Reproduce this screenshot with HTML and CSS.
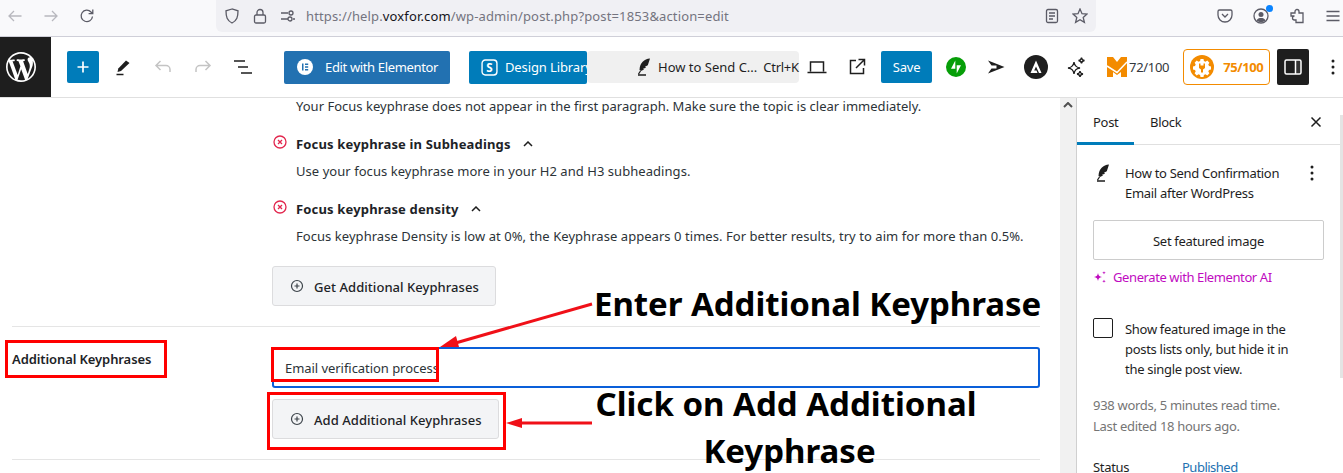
FILE: index.html
```html
<!DOCTYPE html>
<html lang="en">
<head>
<meta charset="utf-8">
<title>How to Send Confirmation Email after WordPress</title>
<link rel="stylesheet" href="styles.css">
</head>
<body>
<header class="browser">
  <div class="nav">
    <svg class="ico dim" viewBox="0 0 16 16"><path d="M14.5 8H2M7 3 2 8l5 5"/></svg>
    <svg class="ico dim" viewBox="0 0 16 16"><path d="M1.5 8H14M9 3l5 5-5 5"/></svg>
    <svg class="ico" viewBox="0 0 16 16"><path d="M13.5 8.5A5.7 5.7 0 1 1 12 4l1.5 1.5M13.8 1.5v4.2H9.6"/></svg>
  </div>
  <div class="urlbar">
    <svg class="ico" viewBox="0 0 16 16"><path d="M8 1 2 2.8c0 6 1 9.6 6 12.2 5-2.600 6-6.200 6-12.200z"/></svg>
    <svg class="ico" viewBox="0 0 16 16"><rect x="2.500" y="7" width="11" height="8" rx="1.500"/><path d="M5 7V4.500a3 3 0 0 1 6 0V7"/></svg>
    <svg class="ico" viewBox="0 0 16 16"><path d="M1 5h7M13 11h2M1 11h7"/><circle cx="11" cy="5" r="2"/><circle cx="4" cy="11" r="2" transform="translate(6 0)"/></svg>
    <span class="url">https://help.<b>voxfor.com</b>/wp-admin/post.php?post=1853&amp;action=edit</span>
    <svg class="ico" viewBox="0 0 16 16"><rect x="2.500" y="1.500" width="11" height="13" rx="1.500"/><path d="M5 5h6M5 8h6M5 11h4"/></svg>
    <svg class="ico" viewBox="0 0 16 16"><path d="m8 1 2 4.700 5 .4-3.800 3.300 1.200 5L8 11.700l-4.400 2.700 1.200-5L1 6.100l5-.4z"/></svg>
  </div>
  <div class="tray">
    <svg class="ico" viewBox="0 0 16 16"><path d="M2.500 2h11A1.500 1.500 0 0 1 15 3.500V7a7 7 0 0 1-14 0V3.500A1.500 1.500 0 0 1 2.500 2zM5 6l3 3 3-3"/></svg>
    <span class="account">
      <svg class="ico" viewBox="0 0 16 16"><circle cx="8" cy="8" r="7"/><circle class="solid" cx="8" cy="6.500" r="2.500"/><path class="solid" d="M3.500 12.500c1-2 2.500-2.500 4.500-2.500s3.500.5 4.500 2.500c-2.500 2-6.500 2-9 0z"/></svg>
      <i class="dot"></i>
    </span>
    <svg class="ico" viewBox="0 0 16 16"><path d="M6 3.500a2 2 0 0 1 4 0V5h4v9.500H7V12H5.500a2 2 0 0 1 0-4H2V5h4z"/></svg>
    <svg class="ico" viewBox="0 0 16 16"><path d="M1.500 3.500h13M1.500 8h13M1.500 12.500h13"/></svg>
  </div>
</header>

<div class="toolbar">
  <div class="wp"><svg viewBox="0 0 20 20"><path d="M20 10c0-5.510-4.490-10-10-10C4.480 0 0 4.490 0 10c0 5.520 4.480 10 10 10 5.510 0 10-4.480 10-10zM7.780 15.370 4.370 6.220c.55-.02 1.170-.08 1.170-.08.5-.06.44-1.130-.06-1.110 0 0-1.450.11-2.370.11-.18 0-.37 0-.58-.01C4.120 2.690 6.870 1.110 10 1.110c2.330 0 4.450.87 6.050 2.340-.68-.11-1.650.39-1.650 1.580 0 .74.45 1.360.9 2.100.35.61.55 1.360.55 2.460 0 1.490-1.400 5-1.400 5l-3.030-8.370c.54-.02.82-.17.82-.17.5-.05.44-1.250-.06-1.220 0 0-1.440.12-2.380.12-.87 0-2.330-.12-2.330-.12-.5-.03-.56 1.200-.06 1.220l.92.08 1.260 3.410zM17.410 10c.24-.64.74-1.870.43-4.250.7 1.290 1.050 2.710 1.050 4.250 0 3.290-1.730 6.240-4.400 7.780.97-2.590 1.940-5.200 2.920-7.780zM6.100 18.090C3.120 16.650 1.110 13.530 1.110 10c0-1.300.23-2.480.72-3.590C3.250 10.300 4.670 14.200 6.100 18.090zm4.030-6.630 2.580 6.980c-.86.29-1.760.45-2.710.45-.79 0-1.570-.11-2.290-.33.81-2.380 1.620-4.740 2.420-7.100z"/></svg></div>
  <button class="plus"><svg viewBox="0 0 16 16"><path d="M8 2.500v11M2.500 8h11"/></svg></button>
  <svg class="tool pencil" viewBox="0 0 20 20"><path class="fill" d="M13 3.500 16.500 6 8 14l-3.500 1 .8-3.500z"/><path d="M3.500 17.500h7"/></svg>
  <svg class="tool undo" viewBox="0 0 20 20"><path d="M7.500 4 3 8.500 7.500 13M3 8.500h10a4 4 0 0 1 4 4V15"/></svg>
  <svg class="tool redo" viewBox="0 0 20 20"><path d="M12.500 4 17 8.500 12.500 13M17 8.500H7a4 4 0 0 0-4 4V15"/></svg>
  <svg class="tool list" viewBox="0 0 20 20"><path d="M1 4h11M5 10h10M8 16h11"/></svg>
  <a class="cta elementor"><svg class="badge" viewBox="0 0 16 16"><circle cx="8" cy="8" r="8"/><path class="cut" d="M5 4.500h1.500v7H5zM8 4.500h3.200V6H8zM8 7.250h3.200v1.500H8zM8 10h3.200v1.500H8z"/></svg>Edit with Elementor</a>
  <a class="cta library"><svg class="sbadge" viewBox="0 0 16 16"><rect x="1" y="1" width="14" height="14" rx="3"/><text x="8" y="12" text-anchor="middle">S</text></svg><span class="clip">Design Library</span></a>
  <div class="command">
    <svg class="feather" viewBox="0 0 20 20"><path class="fill" d="M16 1.500C10 2 6 5.500 5.500 13l1.500 1 3-1.500-1-.8 3-1-1-.9 2.800-1.600z"/><path d="M4 18h8M6.500 14 4.500 17"/></svg>
    <span class="ctitle">How to Send C...</span>
    <span class="kbd">Ctrl+K</span>
  </div>
  <svg class="tool laptop" viewBox="0 0 20 20"><path d="M3.500 14.500V5h13v9.500M0.500 15.500h19"/></svg>
  <svg class="tool external" viewBox="0 0 20 20"><path d="M9 3.500H3.500v13h13V11M9 11l8-8M11.500 2.500H17.500V8.500"/></svg>
  <button class="save">Save</button>
  <svg class="plug jetpack" viewBox="0 0 20 20"><circle cx="10" cy="10" r="10"/><path class="w" d="M9.300 3.500v8.300H5zM10.700 16.500V8.200H15z"/></svg>
  <svg class="plug send" viewBox="0 0 20 20"><path d="M2 3.500 18.500 10 2 16.500l3.500-5h5v-3h-5z"/></svg>
  <svg class="plug astra" viewBox="0 0 24 24"><circle cx="12" cy="12" r="12"/><path class="w" d="M12 5.500 17.500 18h-2.500l-3-6.500-1.800 4h2.300l1 2.500H6.500z"/></svg>
  <svg class="plug spark" viewBox="0 0 22 22"><path d="M9 6c.6 4 2 5.500 6 6-4 .6-5.400 2-6 6-.6-4-2-5.400-6-6 4-.5 5.400-2 6-6zM16.500 1.500c.3 2 1 2.700 3 3-2 .3-2.700 1-3 3-.3-2-1-2.700-3-3 2-.3 2.700-1 3-3zM15 15c.3 2 1 2.700 3 3-2 .3-2.700 1-3 3-.3-2-1-2.700-3-3 2-.3 2.700-1 3-3z"/></svg>
  <svg class="mlogo" viewBox="0 0 20 20"><path d="M0 0h6l4 5 4-5h6v20h-6v-5l-4 3-4-3v5H0z"/><path class="m2" d="M0 9l10 6.500L20 5"/></svg>
  <span class="mscore">72/100</span>
  <span class="score"><svg viewBox="0 0 24 24"><circle cx="12" cy="12" r="12"/><path class="w" d="M10.500 4h3l.4 2 1.600.7 1.800-1.100 2.100 2.100-1.100 1.800.7 1.500 2 .5v3l-2 .4-.7 1.600 1.100 1.800-2.100 2.100-1.800-1.100-1.600.7-.4 2h-3l-.4-2-1.600-.7-1.800 1.100-2.100-2.100 1.100-1.800-.7-1.600-2-.4v-3l2-.5.7-1.500-1.100-1.800 2.100-2.100 1.800 1.100 1.600-.7z"/><path class="o" d="M9 8.500h1.500v2h3v-2H15v4.500l-2 1.500v3h-2v-3L9 13z"/></svg><b>75/100</b></span>
  <button class="panel"><svg viewBox="0 0 20 20"><rect x="2" y="3" width="16" height="14" rx="1.500"/><path d="M12.500 3v14"/><path class="shade" d="M12.500 3H18v14h-5.500z"/></svg></button>
  <svg class="more" viewBox="0 0 4 20"><circle cx="2" cy="4" r="1.500"/><circle cx="2" cy="10" r="1.500"/><circle cx="2" cy="16" r="1.500"/></svg>
</div>

<main class="workspace">
  <div class="canvas">
    <section class="row first">
      <div></div>
      <div class="checks">
        <p class="hint lead">Your Focus keyphrase does not appear in the first paragraph. Make sure the topic is clear immediately.</p>
        <div class="check">
          <h4><svg class="err" viewBox="0 0 14 14"><circle cx="7" cy="7" r="6"/><path d="M5 5l4 4M9 5l-4 4"/></svg>Focus keyphrase in Subheadings<svg class="chev" viewBox="0 0 10 6"><path d="M1 5l4-4 4 4"/></svg></h4>
          <p class="hint">Use your focus keyphrase more in your H2 and H3 subheadings.</p>
        </div>
        <div class="check">
          <h4><svg class="err" viewBox="0 0 14 14"><circle cx="7" cy="7" r="6"/><path d="M5 5l4 4M9 5l-4 4"/></svg>Focus keyphrase density<svg class="chev" viewBox="0 0 10 6"><path d="M1 5l4-4 4 4"/></svg></h4>
          <p class="hint">Focus keyphrase Density is low at 0%, the Keyphrase appears 0 times. For better results, try to aim for more than 0.5%.</p>
        </div>
        <button class="addbtn"><svg viewBox="0 0 14 14"><circle cx="7" cy="7" r="5.500"/><path d="M7 4.500v5M4.500 7h5"/></svg>Get Additional Keyphrases</button>
      </div>
    </section>
    <section class="row second">
      <label class="rowlabel">Additional Keyphrases</label>
      <div class="field">
        <div class="input">Email verification process</div>
        <button class="addbtn"><svg viewBox="0 0 14 14"><circle cx="7" cy="7" r="5.500"/><path d="M7 4.500v5M4.500 7h5"/></svg>Add Additional Keyphrases</button>
      </div>
    </section>
  </div>
  <div class="gutter"><svg viewBox="0 0 10 6"><path d="M1 5l4-4 4 4"/></svg></div>
  <aside class="sidebar">
    <div class="tabs">
      <span class="tab on">Post</span>
      <span class="tab">Block</span>
      <svg class="close" viewBox="0 0 12 12"><path d="M1.500 1.500l9 9M10.500 1.500l-9 9"/></svg>
    </div>
    <div class="sidebody">
      <div class="postcard">
        <svg class="feather" viewBox="0 0 20 20"><path class="fill" d="M16 1.500C10 2 6 5.500 5.500 13l1.500 1 3-1.500-1-.8 3-1-1-.9 2.800-1.600z"/><path d="M4 18h8M6.500 14 4.500 17"/></svg>
        <span class="ptitle">How to Send Confirmation Email after WordPress</span>
        <svg class="more small" viewBox="0 0 4 20"><circle cx="2" cy="4" r="1.500"/><circle cx="2" cy="10" r="1.500"/><circle cx="2" cy="16" r="1.500"/></svg>
      </div>
      <button class="featured">Set featured image</button>
      <div class="genai"><svg viewBox="0 0 14 14"><path d="M5 3c.4 2.500 1.200 3.300 4 4-2.800.6-3.600 1.500-4 4-.4-2.500-1.200-3.400-4-4 2.800-.7 3.600-1.500 4-4zM11 1c.2 1.100.6 1.500 1.800 1.800-1.200.2-1.600.6-1.800 1.800-.2-1.200-.6-1.600-1.800-1.800C10.400 2.500 10.800 2.100 11 1zM11 9.500c.2 1.100.6 1.500 1.800 1.800-1.200.2-1.600.6-1.800 1.800-.2-1.200-.6-1.600-1.800-1.800 1.200-.3 1.600-.7 1.800-1.800z"/></svg>Generate with Elementor AI</div>
      <div class="checkrow"><span class="box"></span><span class="boxtext">Show featured image in the posts lists only, but hide it in the single post view.</span></div>
      <p class="meta">938 words, 5 minutes read time.<br>Last edited 18 hours ago.</p>
      <div class="status"><span>Status</span><a>Published</a></div>
    </div>
    <div class="sidescroll"></div>
  </aside>
</main>

<div class="mark mark-label"></div>
<div class="mark mark-input"></div>
<div class="mark mark-button"></div>
<svg class="arrows" viewBox="0 0 1343 473">
  <path d="M592 304 452 344"/><path class="head" d="M440 347 456 336 459 347z"/>
  <path d="M592 423H520"/><path class="head" d="M506 423 522 418V428z"/>
</svg>
<div class="note note-one">Enter Additional Keyphrase</div>
<div class="note note-two">Click on Add Additional<br><span class="note-last">Keyphrase</span></div>
</body>
</html>
```
FILE: styles.css
```css
* { box-sizing: border-box; }
html, body { margin: 0; height: 473px; overflow: hidden; }
body { position: relative; background: #fff; color: #1e1e1e; font: 13px/20px "Noto Sans", "Open Sans", sans-serif; }
p, h4 { margin: 0; }
button { font: inherit; color: inherit; border: 0; padding: 0; }
svg { display: block; flex: none; }

/* browser chrome */
.browser { display: flex; height: 37px; background: #f9f9fb; border-bottom: 1px solid #cfcfd8; }
.ico { width: 16px; height: 16px; fill: none; stroke: #5b5b66; stroke-width: 1.300; }
.ico.dim { stroke: #b8b8be; }
.ico .solid { fill: #5b5b66; stroke: none; }
.nav { display: flex; width: 216px; gap: 20px; padding: 8px 0 0 7px; }
.urlbar { display: flex; width: 880px; height: 32px; gap: 12px; align-items: center; padding: 0 8px; background: #f0f0f4; border-radius: 0 0 6px 6px; }
.url { flex: 1; margin-left: -2px; color: #74747f; font-size: 13px; letter-spacing: .14px; white-space: nowrap; }
.url b { font-weight: 400; color: #15141a; }
.tray { display: flex; flex: 1; justify-content: flex-end; gap: 20px; padding: 8px 2px 0 0; }
.account { position: relative; height: 16px; }
.dot { position: absolute; top: -3px; right: -4px; width: 7px; height: 7px; border-radius: 50%; background: #0a84ff; }

/* editor toolbar */
.toolbar { display: flex; align-items: center; height: 61px; position: relative; border-bottom: 1px solid #e0e0e0; }
.wp { display: flex; align-items: center; width: 51px; height: 60px; padding-left: 6px; background: #1e1e1e; }
.wp svg { width: 30px; height: 30px; fill: #fff; }
.plus { display: flex; align-items: center; justify-content: center; width: 32px; height: 32px; margin-left: 16px; background: #007cba; border-radius: 2px; }
.plus svg { width: 16px; height: 16px; fill: none; stroke: #fff; stroke-width: 1.700; }
.tool { width: 20px; height: 20px; fill: none; stroke: #1e1e1e; stroke-width: 1.500; }
.tool .fill { fill: #1e1e1e; stroke: none; }
.pencil { margin-left: 14px; }
.undo { margin-left: 20px; stroke: #c4c4c4; }
.redo { margin-left: 20px; stroke: #c4c4c4; }
.list { margin-left: 20px; }
.cta { display: flex; align-items: center; height: 33px; color: #fff; border-radius: 2px; white-space: nowrap; }
.elementor { width: 166px; margin-left: 31px; padding-left: 13px; gap: 12px; background: #2271b1; letter-spacing: -.35px; }
.badge { width: 16px; height: 16px; fill: #fff; }
.badge .cut { fill: #2271b1; }
.library { width: 118px; margin-left: 19px; padding-left: 12px; gap: 7px; background: #007cba; }
.clip { display: block; width: 82px; overflow: hidden; letter-spacing: -.12px; }
.sbadge { width: 17px; height: 17px; fill: none; stroke: #fff; stroke-width: 1.300; }
.sbadge text { fill: #fff; stroke: none; font: 700 11px "Noto Sans", sans-serif; }
.command { display: flex; align-items: center; width: 212px; height: 32px; padding-left: 47px; background: #f0f0f0; border-radius: 4px; }
.feather { width: 20px; height: 20px; fill: none; stroke: #1e1e1e; stroke-width: 1.300; }
.feather .fill { fill: #1e1e1e; stroke: none; }
.ctitle { margin-left: 4px; white-space: nowrap; }
.kbd { margin-left: 6px; white-space: nowrap; letter-spacing: -.3px; }
.laptop { margin-left: 8px; }
.external { margin-left: 20px; }
.save { width: 51px; height: 32px; margin-left: 14px; background: #007cba; color: #fff; border-radius: 2px; letter-spacing: -.2px; }
.plug { width: 20px; height: 20px; margin-left: 14px; fill: #1e1e1e; }
.plug .w { fill: #fff; }
.jetpack { fill: #069e08; }
.send { margin-left: 20px; }
.astra { width: 24px; height: 24px; margin-left: 18px; }
.spark { width: 22px; height: 22px; margin-left: 17px; fill: none; stroke: #1e1e1e; stroke-width: 1.300; }
.mlogo { width: 20px; height: 20px; margin-left: 20px; fill: #f38b00; }
.mlogo .m2 { fill: none; stroke: #fff; stroke-width: 1.500; }
.mscore { margin-left: 2px; color: #32373c; letter-spacing: -.3px; }
.score { display: flex; align-items: center; width: 87px; height: 36px; margin-left: 14px; padding-left: 6px; gap: 9px; border: 1px solid #f38b00; border-radius: 4px; color: #f38b00; letter-spacing: -.4px; }
.score svg { width: 24px; height: 24px; fill: #f38b00; }
.score .w { fill: #fff; }
.score .o { fill: #f38b00; }
.panel { display: flex; align-items: center; justify-content: center; width: 32px; height: 36px; margin-left: 7px; background: #1e1e1e; border-radius: 2px; }
.panel svg { width: 20px; height: 20px; fill: none; stroke: #fff; stroke-width: 1.500; }
.panel .shade { fill: #fff; fill-opacity: .1; stroke: none; }
.more { width: 4px; height: 20px; margin-left: 22px; fill: #1e1e1e; }

/* workspace */
.workspace { display: flex; height: 375px; overflow: hidden; }
.canvas { width: 1060px; padding: 0 20px 0 12px; }
.row { display: grid; grid-template-columns: 260px 1fr; border-bottom: 1px solid #e5e5e5; }
.first { height: 229px; }
.second { height: 133px; padding-top: 20px; }
.hint { color: #2c3338; letter-spacing: .05px; }
.hint.lead { padding: 0 0 0 24px; margin-top: -2px; letter-spacing: .01px; }
.check { margin-top: 18px; }
.check + .check { margin-top: 18px; }
.check h4 { display: flex; align-items: center; font-size: 13px; font-weight: 700; color: #1d2327; letter-spacing: .16px; }
.check .hint { padding-left: 24px; margin-top: 7px; }
.err { width: 14px; height: 14px; margin: -4px 9px 0 1px; fill: none; stroke: #e2264d; stroke-width: 1.300; }
.chev { width: 10px; height: 6px; margin-left: 12px; fill: none; stroke: #1e1e1e; stroke-width: 1.500; }
.addbtn { display: flex; align-items: center; height: 40px; padding: 1px 16px 0 17px; gap: 10px; background: #f3f4f6; border: 1px solid #dcdcde; border-radius: 3px; font-weight: 500; color: #1d2327; letter-spacing: .05px; }
.addbtn svg { width: 14px; height: 14px; margin-top: -2px; fill: none; stroke: #3c434a; stroke-width: 1.200; }
.checks .addbtn { margin-top: 20px; }
.rowlabel { font-weight: 600; color: #1d2327; margin-top: 2px; letter-spacing: -.1px; }
.input { height: 41px; padding: 9px 11px 0; border: 2px solid #0a5fd9; border-radius: 3px; color: #2c3338; letter-spacing: -.05px; }
.field .addbtn { margin-top: 11px; }
.gutter { width: 17px; background: #f1f1f1; border-right: 1px solid #d0d0d0; padding: 4px 3px; }
.gutter svg { width: 10px; height: 6px; fill: none; stroke: #505050; stroke-width: 2; }

/* sidebar */
.sidebar { position: relative; width: 266px; letter-spacing: -.3px; }
.tabs { display: flex; align-items: center; height: 47px; border-bottom: 1px solid #e0e0e0; position: relative; }
.tab { padding: 0 16px; height: 47px; line-height: 48px; }
.tab.on { width: 57px; border-bottom: 3px solid #007cba; }
.close { position: absolute; right: 21px; top: 18px; width: 12px; height: 12px; fill: none; stroke: #1e1e1e; stroke-width: 1.500; }
.sidebody { padding: 18px 19px 0 16px; }
.postcard { display: flex; gap: 12px; }
.ptitle { width: 170px; }
.postcard .more { margin: 0 0 0 3px; }
.featured { display: block; width: 231px; height: 40px; margin-top: 17px; padding-top: 2px; background: #fff; border: 1px solid #ccc; border-radius: 2px; letter-spacing: -.3px; }
.genai { display: flex; align-items: center; gap: 6px; margin-top: 7px; color: #c00bbf; letter-spacing: -.4px; }
.genai svg { width: 14px; height: 14px; fill: #c00bbf; }
.checkrow { display: flex; gap: 12px; margin-top: 31px; }
.box { flex: none; width: 20px; height: 20px; border: 1px solid #1e1e1e; border-radius: 2px; }
.boxtext { width: 172px; padding-top: 1px; }
.meta { margin-top: 16px; color: #757575; line-height: 21px; }
.status { display: flex; margin-top: 20px; }
.status span { width: 89px; }
.status a { color: #2271b1; letter-spacing: -.5px; }
.sidescroll { position: absolute; top: 17px; right: 0; width: 3px; height: 263px; background: #e4e4e4; }

/* annotations laid over the screenshot */
.mark { position: absolute; border: 3px solid #f00; }
.mark-label { left: 5px; top: 340px; width: 162px; height: 38px; }
.mark-input { left: 271px; top: 347px; width: 168px; height: 35px; }
.mark-button { left: 267px; top: 392px; width: 239px; height: 58px; }
.arrows { position: absolute; left: 0; top: 0; width: 1343px; height: 473px; fill: none; stroke: #f01018; stroke-width: 3; }
.arrows .head { fill: #f01018; stroke: none; }
.note { position: absolute; font: 700 33px/47px "Noto Sans", sans-serif; color: #000; white-space: nowrap; }
.note-one { left: 594px; top: 280px; letter-spacing: -.05px; }
.note-two { left: 592px; top: 380px; width: 388px; text-align: center; }
.note-last { display: inline-block; padding-left: 7px; }
```
